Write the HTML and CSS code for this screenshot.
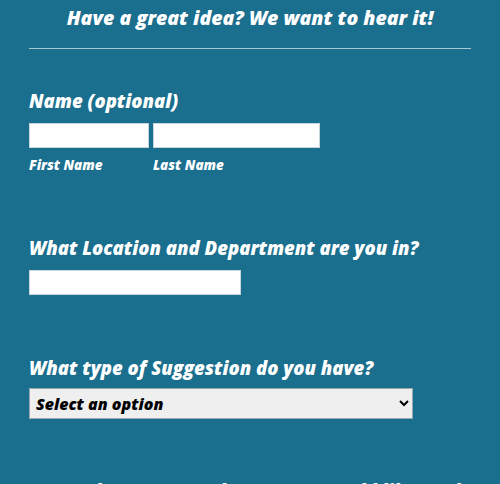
FILE: index.html
```html
<!DOCTYPE html>
<html lang="en">
<head>
    <meta charset="UTF-8">
    <meta name="viewport" content="width=device-width, initial-scale=1.0">
    <title>Suggestion Box</title>
    <link rel="stylesheet" href="styles.css">
</head>
<body>
    <div class="container">
        <h1 class="title">Have a great idea? We want to hear it!</h1>
        <hr class="divider">

        <form class="suggestion-form">
            <div class="field name-field">
                <label class="question">Name (optional)</label>
                <div class="name-row">
                    <div class="name-part">
                        <input type="text" class="text-input first-name">
                        <span class="sub-label">First Name</span>
                    </div>
                    <div class="name-part">
                        <input type="text" class="text-input last-name">
                        <span class="sub-label">Last Name</span>
                    </div>
                </div>
            </div>

            <div class="field location-field">
                <label class="question">What Location and Department are you in?</label>
                <input type="text" class="text-input location">
            </div>

            <div class="field type-field">
                <label class="question">What type of Suggestion do you have?</label>
                <select class="select-input">
                    <option>Select an option</option>
                    <option>Process</option>
                    <option>Safety</option>
                    <option>Other</option>
                </select>
            </div>

            <div class="field">
                <label class="question">Do you have an attachment you would like to share?</label>
            </div>
        </form>
    </div>
</body>
</html>
```

FILE: styles.css
```css
html, body {
    margin: 0;
    padding: 0;
}
body {
    background-color: #1a6e8e;
    color: #fff;
    font-family: "Open Sans", "Lato", sans-serif;
    font-weight: 800;
    font-style: italic;
}
.container {
    padding: 0 29px;
}
.title {
    text-align: center;
    font-size: 19.5px;
    font-weight: 800;
    margin: 0;
    padding-top: 6px;
    line-height: 24px;
}
.divider {
    border: none;
    border-top: 1px solid #a9c7d4;
    margin: 18px 0 0 0;
}
.suggestion-form {
    padding-top: 40px;
}
.field {
    display: flex;
    flex-direction: column;
    align-items: flex-start;
    margin-bottom: 60px;
}
.name-field {
    margin-bottom: 62px;
}
.location-field {
    margin-bottom: 61px;
}
.question {
    font-size: 18.5px;
    line-height: 24px;
    margin-bottom: 10px;
    white-space: nowrap;
}
.type-field .question {
    margin-bottom: 8px;
}
.name-row {
    display: flex;
    gap: 4px;
}
.name-part {
    display: flex;
    flex-direction: column;
}
.sub-label {
    font-size: 13.5px;
    margin-top: 8px;
    line-height: 18px;
}
.text-input {
    box-sizing: border-box;
    height: 25px;
    border: 1px solid #c8d6dc;
    background: #fff;
    margin: 0;
}
.first-name {
    width: 120px;
}
.last-name {
    width: 167px;
}
.location {
    width: 212px;
}
.select-input {
    box-sizing: border-box;
    width: 384px;
    height: 31px;
    margin: 0;
    background: #efefef;
    border: 1px solid #9aa9b0;
    color: #000;
    font-family: inherit;
    font-weight: 800;
    font-style: italic;
    font-size: 16px;
    padding: 0 2px;
}
```
